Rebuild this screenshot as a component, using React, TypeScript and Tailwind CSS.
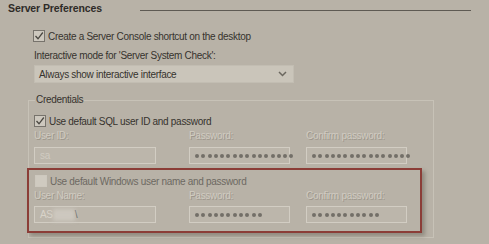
import React from "react";

function Check({ checked, disabled }: { checked?: boolean; disabled?: boolean }) {
  return (
    <div
      className={
        "w-[12px] h-[12px] border flex items-center justify-center shrink-0 " +
        (disabled ? "border-[#cdc8be] bg-[#cfcac0]" : "border-[#77736c] bg-[#cdc8be]")
      }
    >
      {checked && (
        <svg width="10" height="10" viewBox="0 0 10 10">
          <path d="M1.5 5 L4 7.8 L8.8 1.5" fill="none" stroke="#4a4741" strokeWidth="1.3" />
        </svg>
      )}
    </div>
  );
}

function Label({ children }: { children: React.ReactNode }) {
  return (
    <div className="h-[16px] leading-[16px] text-[#d0cbc1] [text-shadow:1px_1px_0_rgba(120,114,104,0.45)]">
      {children}
    </div>
  );
}

function Field({ w, children }: { w: string; children?: React.ReactNode }) {
  return (
    <div className={w + " h-[17px] border border-[#d2cdc3] bg-[#bcb6ab] flex items-center px-[5px] text-[#d0cbc1]"}>
      {children}
    </div>
  );
}

function Dots({ n }: { n: number }) {
  return (
    <div className="flex gap-[2.3px]">
      {Array.from({ length: n }).map((_, i) => (
        <div key={i} className="w-[4px] h-[4px] rounded-full bg-[#736f68]" />
      ))}
    </div>
  );
}

export default function App() {
  return (
    <div className="w-[489px] h-[244px] bg-[#b8b2a7] text-[#36332e] text-[10px] tracking-[-0.3px] overflow-hidden [font-family:'Liberation_Sans',sans-serif]">
      <div className="flex items-center pl-[8px] pt-[1px] h-[16px]">
        <div className="font-bold text-[10.5px] tracking-[-0.1px] text-[#2e2b27]">Server Preferences</div>
        <div className="ml-auto mr-[18px] w-[331px] h-[1px] bg-[#5e5a53] mt-[4px]" />
      </div>

      <div className="pl-[33px]">
        <div className="flex items-center gap-[3px] mt-[14px] h-[12px]">
          <Check checked />
          <span>Create a Server Console shortcut on the desktop</span>
        </div>
        <div className="mt-[7px] h-[14px] leading-[14px] pl-[1px]">Interactive mode for 'Server System Check':</div>
        <div className="mt-[2px] ml-[1px] w-[260px] h-[18px] bg-[#cac5ba] border border-[#c2bdb2] flex items-center pl-[4px] pr-[6px]">
          <span>Always show interactive interface</span>
          <svg className="ml-auto" width="9" height="6" viewBox="0 0 9 6">
            <path d="M1 1 L4.5 4.5 L8 1" fill="none" stroke="#6b675f" strokeWidth="1.5" />
          </svg>
        </div>
      </div>

      <fieldset className="ml-[28px] mt-[10px] w-[406px] h-[145px] border border-[#c7c2b7] pl-[5px]">
        <legend className="ml-[1px] px-[1px] text-[#36332e] leading-[14px]">Credentials</legend>
        <div className="flex items-center gap-[3px] mt-[8px] h-[12px]">
          <Check checked />
          <span>Use default SQL user ID and password</span>
        </div>
        <div className="grid grid-cols-[155px_117px_101px] mt-[1px]">
          <div>
            <Label>User ID:</Label>
            <div className="mt-[3px]"><Field w="w-[122px]">sa</Field></div>
          </div>
          <div>
            <Label>Password:</Label>
            <div className="mt-[3px]"><Field w="w-[101px]"><Dots n={16} /></Field></div>
          </div>
          <div>
            <Label>Confirm password:</Label>
            <div className="mt-[3px]"><Field w="w-[101px]"><Dots n={16} /></Field></div>
          </div>
        </div>

        <div className="-ml-[7px] mt-[4px] w-[395px] h-[65px] border-2 border-[#8b3d37] shadow-[3px_3px_4px_rgba(70,62,52,0.35)] pl-[5px] pt-[5px]">
          <div className="flex items-center gap-[3px] pl-[1px] h-[12px]">
            <Check disabled />
            <span className="text-[#6d6962]">Use default Windows user name and password</span>
          </div>
          <div className="grid grid-cols-[155px_117px_101px] mt-[1px]">
            <div>
              <Label>User Name:</Label>
              <div className="mt-[2px]">
                <Field w="w-[122px]">
                  <span className="text-[#d8d3c9]">AS</span>
                  <span className="w-[22px] h-[12px] bg-[#cdc8bf] blur-[2px]" />
                  <span className="text-[#595550]">\</span>
                </Field>
              </div>
            </div>
            <div>
              <Label>Password:</Label>
              <div className="mt-[2px]"><Field w="w-[101px]"><Dots n={11} /></Field></div>
            </div>
            <div>
              <Label>Confirm password:</Label>
              <div className="mt-[2px]"><Field w="w-[101px]"><Dots n={11} /></Field></div>
            </div>
          </div>
        </div>
      </fieldset>
    </div>
  );
}
